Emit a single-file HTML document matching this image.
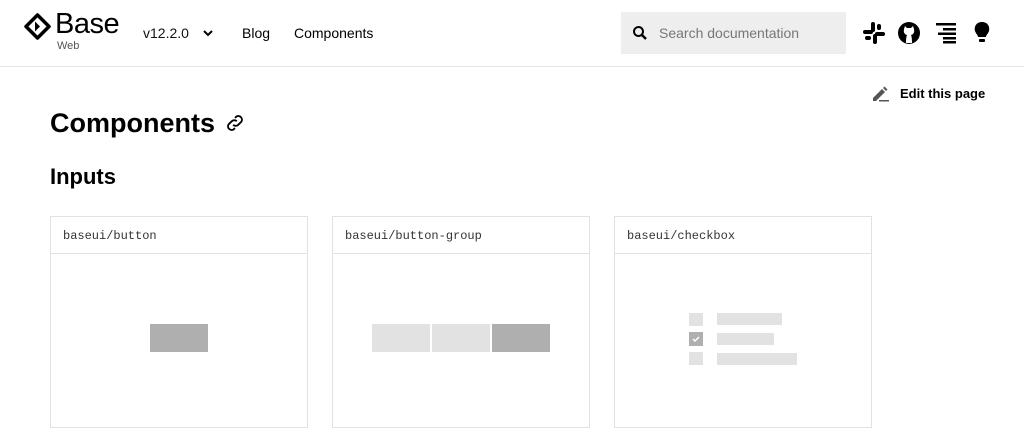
<!DOCTYPE html>
<html><head><style>
*{margin:0;padding:0;box-sizing:border-box}
body{width:1024px;height:442px;overflow:hidden;background:#fff;font-family:"Liberation Sans",sans-serif;color:#000;position:relative}
.a{position:absolute}
.nav{font-size:14px;font-weight:bold;top:25px}
.card{position:absolute;top:216px;width:258px;height:212px;border:1px solid #e2e2e2}
.card .h{height:37px;border-bottom:1px solid #e2e2e2;font-family:"Liberation Mono",monospace;font-size:12px;color:#333;padding:12px 0 0 12px}
.g{position:absolute;background:#e2e2e2}
.d{position:absolute;background:#afafaf}
</style></head><body>
<svg class="a" style="left:24px;top:13px" width="27" height="27" viewBox="0 0 27 27"><path d="M13.5 2 L25 13.5 L13.5 25 L2 13.5 Z" fill="none" stroke="#000" stroke-width="3.5" stroke-linejoin="round"/><path d="M11 8.5 L16 13.5 L11 18.5 Z" fill="#000"/></svg>
<div class="a" style="left:55px;top:8px;font-size:29px;font-weight:500;letter-spacing:-0.5px">Base</div>
<div class="a" style="left:57px;top:40px;font-size:11px;color:#555">Web</div>
<div class="a nav" style="left:143px;font-weight:normal;color:#111">v12.2.0</div>
<svg class="a" style="left:203px;top:29px" width="10" height="8" viewBox="0 0 10 8"><path d="M1 2 L5 6 L9 2" fill="none" stroke="#000" stroke-width="2"/></svg>
<div class="a nav" style="left:242px;font-weight:normal">Blog</div>
<div class="a nav" style="left:294px;font-weight:normal">Components</div>
<div class="a" style="left:621px;top:12px;width:225px;height:42px;background:#eee"></div>
<svg class="a" style="left:632px;top:25px" width="16" height="16" viewBox="0 0 16 16"><circle cx="6.5" cy="6.5" r="4.5" fill="none" stroke="#000" stroke-width="2"/><path d="M10 10 L14 14" stroke="#000" stroke-width="2.5"/></svg>
<div class="a" style="left:659px;top:25px;font-size:14px;color:#777">Search documentation</div>
<svg class="a" style="left:862px;top:21px" width="24" height="24" viewBox="0 0 24 24" fill="#000"><rect x="9" y="1" width="4" height="10" rx="2"/><rect x="1" y="9" width="10" height="4" rx="2"/><rect x="11" y="13" width="4" height="10" rx="2"/><rect x="13" y="11" width="10" height="4" rx="2"/><rect x="15" y="3" width="4" height="6" rx="2"/><rect x="3" y="15" width="6" height="4" rx="2"/></svg>
<svg class="a" style="left:897px;top:21px" width="24" height="24" viewBox="0 0 24 24"><circle cx="12" cy="12" r="11" fill="#000"/><path d="M7 8 L8 5 L10 7 H14 L16 5 L17 8 Q18 13 14 14 Q15 16 15 22 H9 Q9 16 10 14 Q6 13 7 8Z" fill="#fff"/></svg>
<svg class="a" style="left:935px;top:22px" width="22" height="22" viewBox="0 0 22 22" fill="#000"><rect x="1" y="1" width="20" height="2.5"/><rect x="8" y="6" width="13" height="2.5"/><rect x="3" y="10.5" width="18" height="2.5"/><rect x="8" y="15" width="13" height="2.5"/><rect x="8" y="19" width="13" height="2.5"/></svg>
<svg class="a" style="left:972px;top:21px" width="20" height="24" viewBox="0 0 20 24" fill="#000"><path d="M10 1 C4 1 2 6 3 10 C4 13 6 14 6 16 H14 C14 14 16 13 17 10 C18 6 16 1 10 1Z"/><rect x="7" y="18" width="6" height="3" rx="1"/></svg>
<div class="a" style="left:0;top:66px;width:1024px;height:1px;background:#e4e4e4"></div>
<svg class="a" style="left:871px;top:85px" width="18" height="17" viewBox="0 0 18 17"><path d="M2 13 L11 4 L14 7 L5 16 H2Z" fill="#555"/><path d="M12 3 L13.5 1.5 L16.5 4.5 L15 6Z" fill="#555"/><rect x="8" y="15" width="10" height="1.5" fill="#555"/></svg>
<div class="a" style="left:900px;top:86px;font-size:13px;font-weight:bold">Edit this page</div>
<div class="a" style="left:50px;top:108px;font-size:27px;font-weight:bold">Components</div>
<svg class="a" style="left:224px;top:112px" width="22" height="22" viewBox="0 0 24 24" fill="none" stroke="#000" stroke-width="2"><path d="M10 14 A4 4 0 0 0 15.5 14 L19 10.5 A4 4 0 0 0 13.5 5 L12 6.5"/><path d="M14 10 A4 4 0 0 0 8.5 10 L5 13.5 A4 4 0 0 0 10.5 19 L12 17.5"/></svg>
<div class="a" style="left:50px;top:164px;font-size:22px;font-weight:bold">Inputs</div>
<div class="card" style="left:50px"><div class="h">baseui/button</div></div>
<div class="card" style="left:332px"><div class="h">baseui/button-group</div></div>
<div class="card" style="left:614px"><div class="h">baseui/checkbox</div></div>
<div class="d" style="left:150px;top:324px;width:58px;height:28px"></div>
<div class="g" style="left:372px;top:324px;width:58px;height:28px"></div>
<div class="g" style="left:432px;top:324px;width:58px;height:28px"></div>
<div class="d" style="left:492px;top:324px;width:58px;height:28px"></div>
<div class="g" style="left:689px;top:313px;width:14px;height:13px"></div>
<div class="d" style="left:689px;top:332px;width:14px;height:14px"></div>
<svg class="a" style="left:689px;top:332px" width="14" height="14" viewBox="0 0 14 14"><path d="M4 7 L6 9 L10 5" fill="none" stroke="#fff" stroke-width="1.5"/></svg>
<div class="g" style="left:689px;top:352px;width:14px;height:13px"></div>
<div class="g" style="left:717px;top:313px;width:65px;height:12px"></div>
<div class="g" style="left:717px;top:333px;width:57px;height:12px"></div>
<div class="g" style="left:717px;top:353px;width:80px;height:12px"></div>
</body></html>
